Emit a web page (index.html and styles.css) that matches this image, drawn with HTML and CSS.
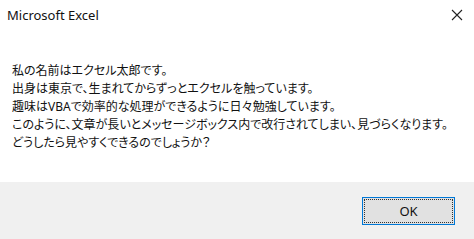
FILE: index.html
```html
<!DOCTYPE html>
<html lang="ja">
<head>
<meta charset="utf-8">
<link rel="stylesheet" href="styles.css">
</head>
<body>
<div class="dialog">
  <div class="titlebar">
    <span class="title">Microsoft Excel</span>
    <svg class="close" width="12" height="12" viewBox="0 0 12 12"><path d="M1 1 L11 11 M11 1 L1 11" stroke="#222" stroke-width="1.1" fill="none"/></svg>
  </div>
  <div class="content">
    <p class="msg">私の名前はエクセル太郎です。<br>出身は東京で、生まれてからずっとエクセルを触っています。<br>趣味はVBAで効率的な処理ができるように日々勉強しています。<br>このように、文章が長いとメッセージボックス内で改行されてしまい、見づらくなります。<br>どうしたら見やすくできるのでしょうか？</p>
  </div>
  <div class="footer">
    <button class="ok">OK</button>
  </div>
</div>
</body>
</html>
```
FILE: styles.css
```css
html, body { margin: 0; padding: 0; background: #fff; }
.dialog {
  width: 474px;
  height: 239px;
  display: flex;
  flex-direction: column;
  font-family: "Noto Sans", "Noto Sans CJK JP", sans-serif;
  color: #000;
}
.titlebar {
  height: 30px;
  display: flex;
  align-items: center;
  justify-content: space-between;
  padding: 0 11px 0 7px;
}
.title { font-size: 13px; color: #111; }
.close { display: block; }
.content {
  flex: 1;
  padding: 32px 0 0 12px;
}
.msg {
  margin: 0;
  font-family: "Noto Sans", "Noto Sans CJK JP", sans-serif;
  font-feature-settings: "palt";
  font-size: 12px;
  line-height: 18px;
  color: #111;
}
.footer {
  height: 57px;
  background: #f0f0f0;
  display: flex;
  align-items: center;
  justify-content: flex-end;
  padding-right: 19px;
}
.ok {
  width: 93px;
  height: 28px;
  background: #e1e1e1;
  border: 1px solid #0078d7;
  outline: 1px dotted #333;
  outline-offset: -3px;
  font-family: "Noto Sans", sans-serif;
  font-size: 13px;
  color: #111;
  padding: 0;
}
```
